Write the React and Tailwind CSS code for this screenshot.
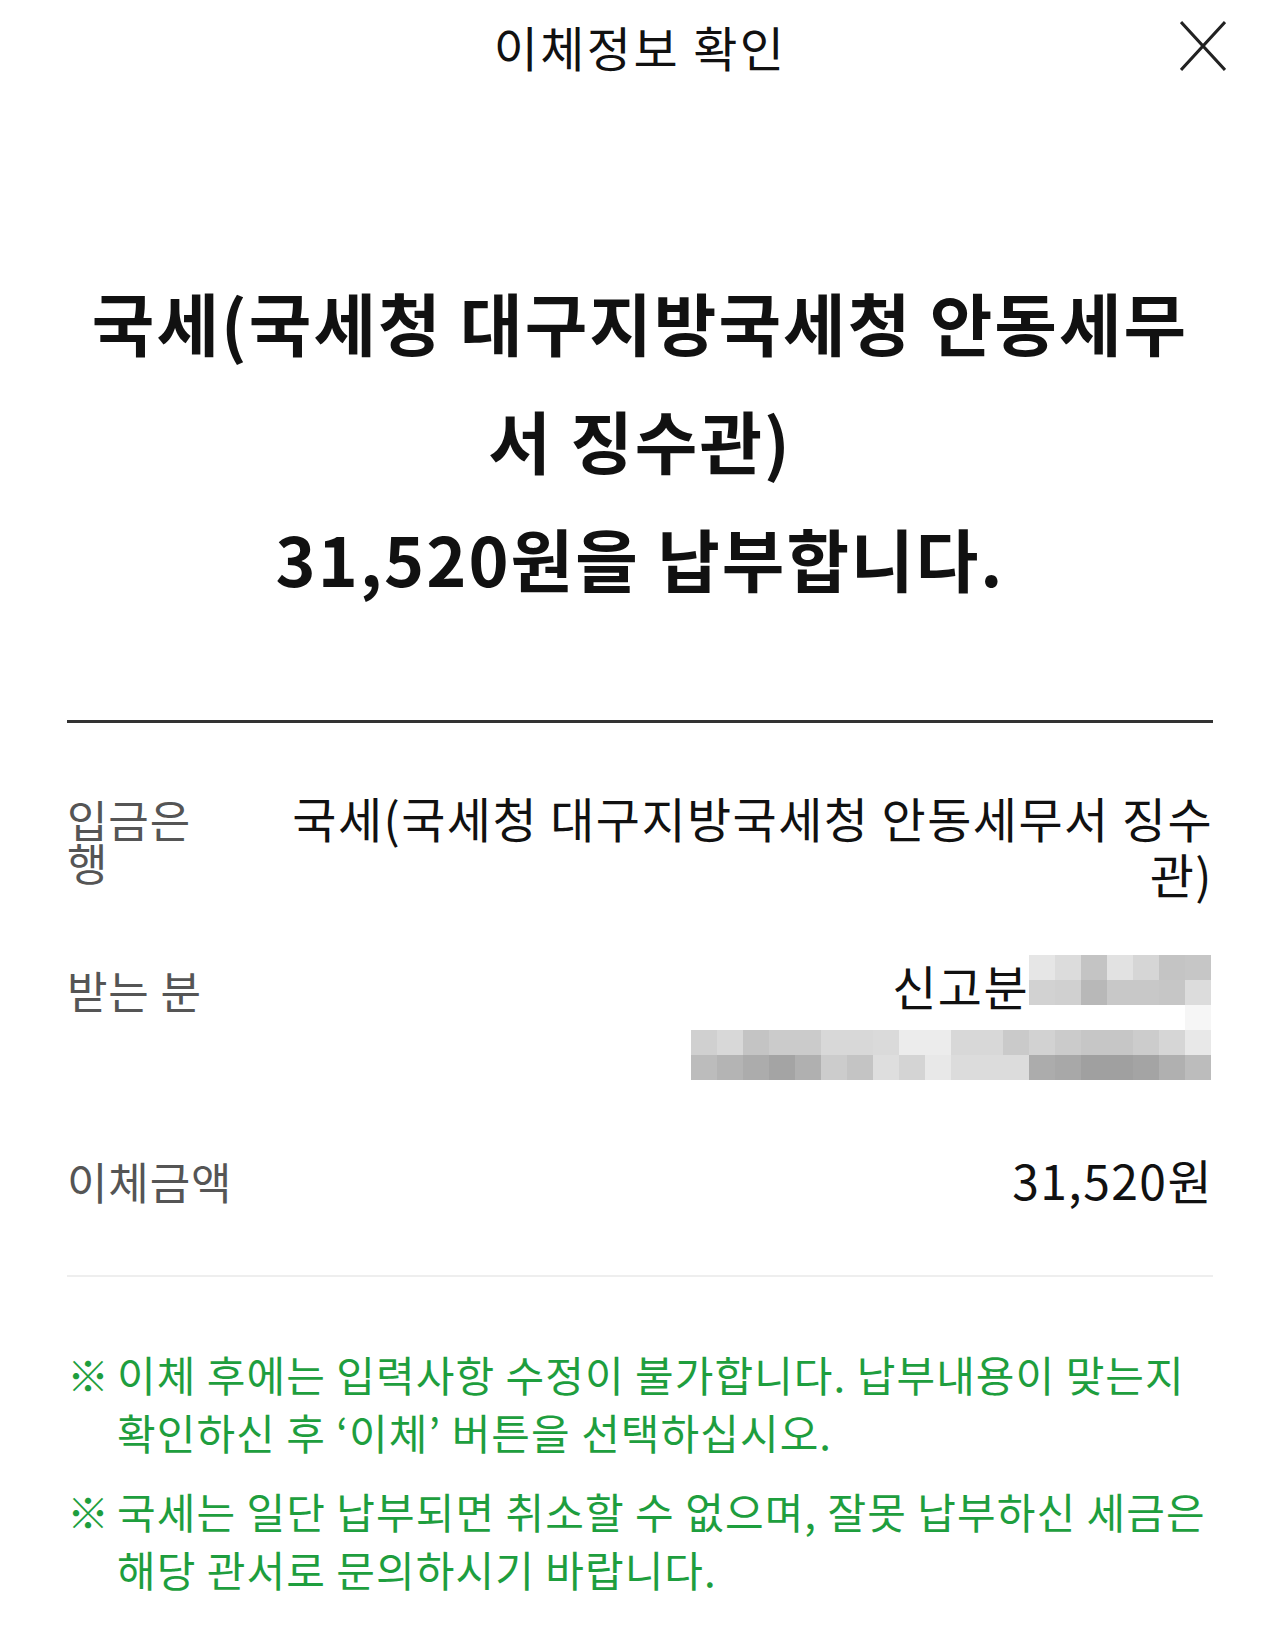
import React from 'react';

// mosaic cells that blur out the payer name / number
const mosaicTop = [
    ['w-[17px] bg-[#e6e6e6]', 'bg-[#dcdcdc]', 'bg-[#c4c4c4]', 'bg-[#e2e2e2]', 'bg-[#d6d6d6]', 'bg-[#c4c4c4]', 'bg-[#c6c6c6]'],
    ['w-[17px] bg-[#d2d2d2]', 'bg-[#d0d0d0]', 'bg-[#b8b8b8]', 'bg-[#c8c8c8]', 'bg-[#c8c8c8]', 'bg-[#c6c6c6]', 'bg-[#dcdcdc]'],
    ['w-[17px] bg-white', 'bg-white', 'bg-white', 'bg-white', 'bg-white', 'bg-white', 'bg-[#f6f6f6]'],
];

const mosaicBottom = [
    ['bg-[#d0d0d0]', 'bg-[#d8d8d8]', 'bg-[#c4c4c4]', 'bg-[#cbcbcb]', 'bg-[#cbcbcb]', 'bg-[#d8d8d8]', 'bg-[#d8d8d8]', 'bg-[#dadada]', 'bg-[#ececec]', 'bg-[#ececec]',
        'bg-[#d8d8d8]', 'bg-[#d8d8d8]', 'bg-[#cacaca]', 'bg-[#d2d2d2]', 'bg-[#cbcbcb]', 'bg-[#c6c6c6]', 'bg-[#c6c6c6]', 'bg-[#cccccc]', 'bg-[#d6d6d6]', 'bg-[#e8e8e8]'],
    ['bg-[#bcbcbc]', 'bg-[#b4b4b4]', 'bg-[#acacac]', 'bg-[#a4a4a4]', 'bg-[#b0b0b0]', 'bg-[#cccccc]', 'bg-[#c4c4c4]', 'bg-[#dedede]', 'bg-[#d4d4d4]', 'bg-[#e8e8e8]',
        'bg-[#dcdcdc]', 'bg-[#dcdcdc]', 'bg-[#dcdcdc]', 'bg-[#acacac]', 'bg-[#a8a8a8]', 'bg-[#a0a0a0]', 'bg-[#a0a0a0]', 'bg-[#a4a4a4]', 'bg-[#b0b0b0]', 'bg-[#bcbcbc]'],
];

const Mosaic = ({ rows }) => (
    <div className="flex flex-col">
        {rows.map((row, i) => (
            <div key={i} className="flex">
                {row.map((cls, j) => (
                    <div key={j} className={`h-[25px] w-[26px] ${cls}`} />
                ))}
            </div>
        ))}
    </div>
);

const Note = ({ children }) => (
    <div className="flex text-[42px] leading-[58px] tracking-[0.025em] text-[#1e9e3e]">
        <span className="w-[50px] shrink-0 tracking-normal">※</span>
        <p className="flex-1">{children}</p>
    </div>
);

const App = () => {
    return (
        <div className="w-[1280px] h-[1650px] bg-white text-[#111] font-['Noto_Sans_CJK_KR',sans-serif]">
            {/* header */}
            <div className="relative h-[92px] flex items-center justify-center">
                <h1 className="text-[48px] leading-none tracking-[0.05em] text-[#111]">이체정보 확인</h1>
                <button className="absolute right-[54px] top-[21px]">
                    <svg width="46" height="50" viewBox="0 0 46 50">
                        <path d="M1 1 L45 49 M45 1 L1 49" stroke="#222" strokeWidth="3" fill="none" />
                    </svg>
                </button>
            </div>

            {/* summary */}
            <div className="mt-[171px] px-[60px] text-center text-[68px] leading-[118px] tracking-[0.03em] font-bold">
                <p>
                    국세(국세청 대구지방국세청 안동세무
                    <br />
                    서 징수관)
                </p>
                <p>31,520원을 납부합니다.</p>
            </div>

            <div className="mx-[67px] mt-[103px] h-[3px] bg-[#333]" />

            {/* details */}
            <div className="px-[67px]">
                <div className="flex items-start pt-[66px]">
                    <span className="w-[150px] shrink-0 mt-[9px] text-[44px] leading-[43px] tracking-[0.02em] text-[#555]">입금은행</span>
                    <span className="flex-1 ml-[40px] text-right text-[48px] leading-[56px] tracking-[0.03em]">
                        국세(국세청 대구지방국세청 안동세무서 징수관)
                    </span>
                </div>

                <div className="flex items-start justify-between mt-[54px]">
                    <span className="shrink-0 mt-[14px] text-[44px] leading-[43px] tracking-[0.02em] text-[#555]">받는 분</span>
                    <div className="flex flex-col items-end pr-[2px]">
                        <div className="flex items-start">
                            <span className="mt-[2px] text-[48px] leading-[56px] tracking-[0.03em]">신고분</span>
                            <Mosaic rows={mosaicTop} />
                        </div>
                        <Mosaic rows={mosaicBottom} />
                    </div>
                </div>

                <div className="flex items-start justify-between mt-[71px]">
                    <span className="shrink-0 mt-[9px] text-[44px] leading-[43px] tracking-[0.02em] text-[#555]">이체금액</span>
                    <span className="text-[48px] leading-[56px] tracking-[0.03em]">31,520원</span>
                </div>

                <div className="mt-[68px] h-[2px] bg-[#eeeeee]" />

                <div className="mt-[68px]">
                    <Note>이체 후에는 입력사항 수정이 불가합니다. 납부내용이 맞는지 확인하신 후 ‘이체’ 버튼을 선택하십시오.</Note>
                    <div className="mt-[21px]">
                        <Note>국세는 일단 납부되면 취소할 수 없으며, 잘못 납부하신 세금은 해당 관서로 문의하시기 바랍니다.</Note>
                    </div>
                </div>
            </div>
        </div>
    );
};

export default App;
